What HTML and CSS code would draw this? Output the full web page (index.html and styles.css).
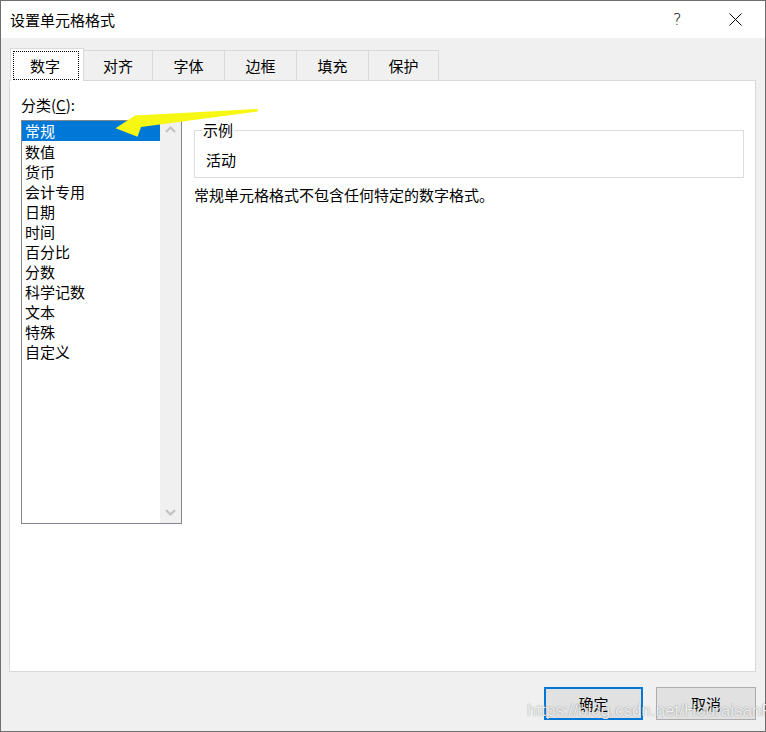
FILE: index.html
```html
<!DOCTYPE html>
<html lang="zh-CN">
<head>
<meta charset="utf-8">
<title>设置单元格格式</title>
<link rel="stylesheet" href="styles.css">
</head>
<body>
<div class="window">
  <div class="titlebar">
    <span class="title">设置单元格格式</span>
    <span class="help">?</span>
    <span class="close">
      <svg width="13" height="13" viewBox="0 0 13 13"><path d="M0.5 0.5 L12.5 12.5 M12.5 0.5 L0.5 12.5" stroke="#000" stroke-width="1" fill="none"/></svg>
    </span>
  </div>
  <div class="content">
    <div class="tabs">
      <div class="tab selected"><span class="focus">数字</span></div>
      <div class="tab w69">对齐</div>
      <div class="tab w72">字体</div>
      <div class="tab w72">边框</div>
      <div class="tab w72">填充</div>
      <div class="tab w70">保护</div>
    </div>
    <div class="panel">
      <div class="label">分类(<u>C</u>):</div>
      <div class="columns">
        <div class="listbox">
          <ul class="items">
            <li class="sel">常规</li>
            <li>数值</li>
            <li>货币</li>
            <li>会计专用</li>
            <li>日期</li>
            <li>时间</li>
            <li>百分比</li>
            <li>分数</li>
            <li>科学记数</li>
            <li>文本</li>
            <li>特殊</li>
            <li>自定义</li>
          </ul>
          <div class="scrollbar">
            <svg class="chev" width="11" height="7" viewBox="0 0 11 7"><path d="M1 6 L5.5 1.5 L10 6" stroke="#c2c2c2" stroke-width="2" fill="none"/></svg>
            <svg class="chev" width="11" height="7" viewBox="0 0 11 7"><path d="M1 1 L5.5 5.5 L10 1" stroke="#c2c2c2" stroke-width="2" fill="none"/></svg>
          </div>
        </div>
        <div class="right">
          <fieldset class="sample">
            <legend>示例</legend>
            <div class="sample-text">活动</div>
          </fieldset>
          <p class="desc">常规单元格格式不包含任何特定的数字格式。</p>
        </div>
      </div>
    </div>
    <div class="buttons">
      <button class="btn ok">确定</button>
      <button class="btn cancel">取消</button>
    </div>
  </div>
  <svg class="arrow" width="766" height="732" viewBox="0 0 766 732">
    <polygon points="115.5,128.3 135,115.5 257.5,109 258,111.5 141,127 137.5,136.8" fill="#f7f714"/>
  </svg>
  <div class="watermark">https://blog.csdn.net/HouraisanF</div>
</div>
</body>
</html>
```

FILE: styles.css
```css
* { box-sizing: border-box; }
html, body { margin: 0; padding: 0; }
body {
  width: 766px;
  height: 732px;
  font-family: "Noto Sans CJK SC", "Noto Sans", sans-serif;
  font-size: 15px;
  color: #000;
  overflow: hidden;
}
.window {
  position: relative;
  width: 766px;
  height: 732px;
  border: 1px solid #6e6e6e;
  background: #f0f0f0;
  display: flex;
  flex-direction: column;
}
.titlebar {
  height: 37px;
  background: #fff;
  display: flex;
  align-items: center;
  padding-left: 9px;
}
.title { flex: 1; line-height: 20px; }
.help {
  font-family: "DejaVu Sans", sans-serif;
  font-size: 16px;
  line-height: 20px;
  width: 12px;
  margin-right: 44px;
  font-weight: 300;
}
.close { width: 13px; height: 13px; margin-right: 23px; display: flex; }
.content {
  flex: 1;
  display: flex;
  flex-direction: column;
  padding: 10px 9px 0 8px;
}
.tabs {
  display: flex;
  align-items: flex-end;
  height: 32px;
  padding-left: 1px;
  position: relative;
  z-index: 1;
}
.tab {
  height: 30px;
  border-top: 1px solid #d9d9d9;
  border-right: 1px solid #d9d9d9;
  display: flex;
  align-items: center;
  justify-content: center;
  line-height: 20px;
  padding-top: 1px;
}
.w69 { width: 69px; }
.w72 { width: 72px; }
.w70 { width: 70px; }
.tab.selected {
  width: 74px;
  height: 33px;
  margin-bottom: -1px;
  background: #fff;
  border-left: 1px solid #d9d9d9;
  padding: 2px 4px 1px 2px;
  align-items: stretch;
}
.focus {
  flex: 1;
  border: 1px dotted #000;
  display: flex;
  align-items: center;
  justify-content: center;
  padding-right: 2px;
}
.panel {
  height: 592px;
  border: 1px solid #d9d9d9;
  background: #fff;
  padding: 14px 10px 0 11px;
}
.label { line-height: 20px; height: 25px; }
.label u { text-underline-offset: 2px; }
.columns { display: flex; gap: 12px; }
.listbox {
  width: 161px;
  height: 404px;
  border: 1px solid #828790;
  display: flex;
}
.items {
  list-style: none;
  margin: 0;
  padding: 0;
  width: 138px;
}
.items li {
  height: 20px;
  line-height: 20px;
  padding-left: 3px;
}
.items li + li { padding-top: 1px; }
.items li.sel { background: #0078d7; color: #fff; }
.scrollbar {
  flex: 1;
  background: #f0f0f0;
  display: flex;
  flex-direction: column;
  justify-content: space-between;
  align-items: center;
  padding: 5px 0 7px;
}
.right { flex: 1; }
.sample {
  margin: 0;
  border: 1px solid #dcdcdc;
  padding: 10px 11px 7px;
  width: 550px;
}
.sample legend {
  padding: 0 1px;
  margin-left: -4px;
  line-height: 20px;
}
.sample-text { line-height: 20px; }
.desc { margin: 7px 0 0; line-height: 20px; }
.buttons {
  display: flex;
  justify-content: flex-end;
  gap: 13px;
  padding-top: 15px;
}
.btn {
  font-family: "Noto Sans CJK SC", "Noto Sans", sans-serif;
  font-size: 15px;
  width: 99px;
  height: 33px;
  background: #e1e1e1;
  color: #000;
  padding: 0;
  margin: 0;
}
.btn.ok { border: 2px solid #0078d7; }
.btn.cancel { border: 1px solid #adadad; width: 100px; }
.arrow { position: absolute; left: -1px; top: -1px; pointer-events: none; }
.watermark {
  position: absolute;
  left: 526px;
  top: 699px;
  font-family: "Liberation Sans", Arial, sans-serif;
  font-size: 17px;
  line-height: 22px;
  color: rgba(255,255,255,0.85);
  text-shadow: 0 0 1px rgba(0,0,0,0.35), 0 0 2px rgba(0,0,0,0.15);
  white-space: nowrap;
}
```
